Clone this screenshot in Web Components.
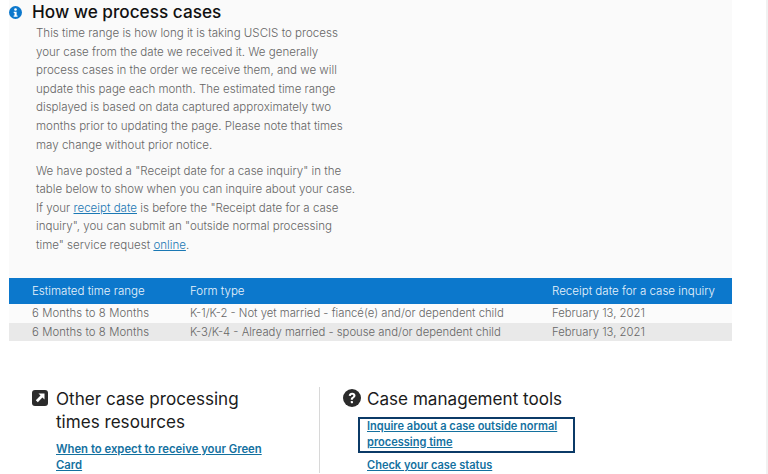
<!DOCTYPE html>
<html>
<head>
<meta charset="utf-8">
<title>How we process cases</title>
<style>
  html, body { margin: 0; height: 100%; overflow: hidden; background: #fff; }
  body { font-family: Inter, "Liberation Sans", sans-serif; }
  process-panel a { color: #1a78b4; }
</style>
</head>
<body>
<case-page>
  <process-panel>
    <p>This time range is how long it is taking USCIS to process<br>your case from the date we received it. We generally<br>process cases in the order we receive them, and we will<br>update this page each month. The estimated time range<br>displayed is based on data captured approximately two<br>months prior to updating the page. Please note that times<br>may change without prior notice.</p>
    <p>We have posted a "Receipt date for a case inquiry" in the<br>table below to show when you can inquire about your case.<br>If your <a href="#">receipt date</a> is before the "Receipt date for a case<br>inquiry", you can submit an "outside normal processing<br>time" service request <a href="#">online</a>.</p>
  </process-panel>
  <times-table></times-table>
  <resource-row>
    <resource-col icon="arrow" heading="Other case processing times resources">
      <a href="#">When to expect to receive your Green Card</a>
    </resource-col>
    <resource-col icon="help" heading="Case management tools" divider>
      <a class="focus" href="#">Inquire about a case outside normal processing time</a>
      <a href="#">Check your case status</a>
    </resource-col>
  </resource-row>
</case-page>

<script>
const ICONS = {
  info: `<svg viewBox="0 0 16 16" width="13" height="13"><circle cx="8" cy="8" r="8" fill="#0c78cc"/><circle cx="8" cy="4.3" r="1.6" fill="#fff"/><path d="M5.8 7h3.6v4.6h1.1v1.6H5.7v-1.6h1.1V8.600h-1z" fill="#fff"/></svg>`,
  arrow: `<svg viewBox="0 0 16 16" width="16" height="16"><rect width="16" height="16" rx="3" fill="#2b2b2b"/><path d="M6.5 3.6h6v6l-2.100-2.100-4.600 4.700-2-2 4.700-4.600z" fill="#fff"/></svg>`,
  help: `<svg viewBox="0 0 18 18" width="18" height="18"><circle cx="9" cy="9" r="9" fill="#2b2b2b"/><path d="M5.700 6.700C5.900 4.900 7.300 3.800 9.200 3.800c1.900 0 3.300 1.200 3.300 2.800 0 1.300-.7 2-1.700 2.600-.7.4-.9.700-.9 1.300v.3H7.800v-.5c0-1.100.4-1.700 1.300-2.300.8-.5 1.200-.8 1.200-1.300 0-.5-.5-.9-1.100-.9-.7 0-1.200.4-1.300 1.100z" fill="#fff"/><rect x="7.800" y="12" width="2.200" height="2.200" rx=".4" fill="#fff"/></svg>`
};

class CasePage extends HTMLElement {
  constructor() {
    super();
    this.attachShadow({ mode: "open" });
    this.shadowRoot.innerHTML = `
      <style>
        :host { display: block; height: 474px; position: relative; overflow: hidden; }
        .main { width: 723px; margin-left: 9px; }
        .bar { position: absolute; top: 0; right: 0; bottom: 0; width: 2px; background: #f1f1f1; }
      </style>
      <div class="main"><slot></slot></div>
      <div class="bar"></div>`;
  }
}

class ProcessPanel extends HTMLElement {
  constructor() {
    super();
    this.attachShadow({ mode: "open" });
    this.shadowRoot.innerHTML = `
      <style>
        :host { display: block; height: 278px; background: #fafafa; }
        h2 {
          margin: 0; display: flex; align-items: center; gap: 10px;
          height: 23px;
          font: 500 17.2px/23px Inter, "Liberation Sans", sans-serif; color: #111;
        }
        .ico { display: flex; margin-top: 2px; }
        .body {
          padding: 0 0 0 27px;
          font: 300 11.55px/18.6px Inter, "Liberation Sans", sans-serif;
          color: #666; white-space: nowrap;
        }
        ::slotted(p) { margin: 0 0 7.5px; }
        ::slotted(p:first-child) { margin-top: 1px; }
      </style>
      <h2><span class="ico">${ICONS.info}</span>How we process cases</h2>
      <div class="body"><slot></slot></div>`;
  }
}

class TimesTable extends HTMLElement {
  constructor() {
    super();
    this.attachShadow({ mode: "open" });
    const rows = [
      ["6 Months to 8 Months", "K-1/K-2 - Not yet married - fiancé(e) and/or dependent child", "February 13, 2021"],
      ["6 Months to 8 Months", "K-3/K-4 - Already married - spouse and/or dependent child", "February 13, 2021"]
    ];
    this.shadowRoot.innerHTML = `
      <style>
        :host { display: block; }
        .row {
          display: grid; grid-template-columns: 158px 362px 1fr;
          padding-left: 23px; height: 18.5px; align-items: center;
          font: 300 11.3px/18px Inter, "Liberation Sans", sans-serif;
          color: #666; white-space: nowrap;
        }
        .row span:first-child { letter-spacing: .1px; }
        .head { height: 26px; background: #0c78cc; color: #e8f3fb; font-size: 11.55px; }
        .head span:first-child { letter-spacing: 0; }
        .odd { background: #fbfbfb; }
        .even { background: #e9e9e9; }
      </style>
      <div class="row head"><span>Estimated time range</span><span>Form type</span><span>Receipt date for a case inquiry</span></div>
      ${rows.map((r, i) => `<div class="row ${i % 2 ? "even" : "odd"}">${r.map(c => `<span>${c}</span>`).join("")}</div>`).join("")}`;
  }
}

class ResourceRow extends HTMLElement {
  constructor() {
    super();
    this.attachShadow({ mode: "open" });
    this.shadowRoot.innerHTML = `
      <style>
        :host { display: grid; grid-template-columns: 310px 1fr; margin-top: 46px; }
      </style>
      <slot></slot>`;
  }
}

class ResourceCol extends HTMLElement {
  constructor() {
    super();
    this.attachShadow({ mode: "open" });
  }

  connectedCallback() {
    const divider = this.hasAttribute("divider");
    this.shadowRoot.innerHTML = `
      <style>
        :host { display: block; padding-left: 23px; ${divider ? "border-left: 1px solid #d8d8d8;" : ""} }
        h3 {
          margin: 0; display: flex; gap: ${divider ? "6px" : "8px"}; max-width: 240px;
          font: 400 17.1px/23px Inter, "Liberation Sans", sans-serif; color: #1b1b1b;
        }
        .ico { display: flex; height: 22px; align-items: center; flex: none; }
        .links { padding: 8px 0 0 24px; width: 214px; display: flex; flex-direction: column; }
        ::slotted(a) {
          font: 600 ${divider ? "11.05px" : "11.3px"}/16px Inter, "Liberation Sans", sans-serif;
          color: #14719f;
        }
        ::slotted(a.focus) {
          outline: 2px solid #0b3a67;
          line-height: 15.5px;
          margin: 1px 0 6px -7px; padding: 0 10px 1px 7px;
          width: 196px;
        }
      </style>
      <h3><span class="ico">${ICONS[this.getAttribute("icon")]}</span><span>${this.getAttribute("heading")}</span></h3>
      <div class="links"><slot></slot></div>`;
  }
}

customElements.define("case-page", CasePage);
customElements.define("process-panel", ProcessPanel);
customElements.define("times-table", TimesTable);
customElements.define("resource-row", ResourceRow);
customElements.define("resource-col", ResourceCol);
</script>
</body>
</html>
